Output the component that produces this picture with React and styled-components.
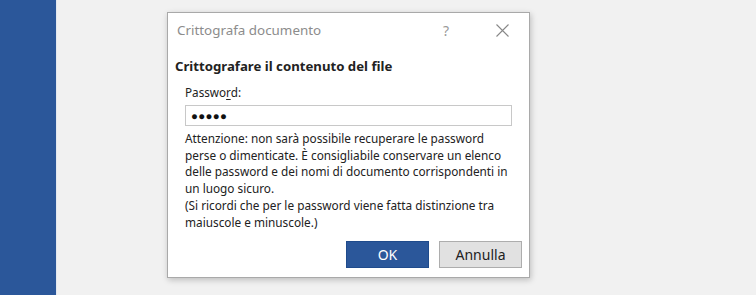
import React from "react";
import styled, { createGlobalStyle } from "styled-components";

const Global = createGlobalStyle`
  html, body { margin: 0; padding: 0; background: #f1f1f1; }
  body { font-family: "Noto Sans", "Open Sans", sans-serif; }
`;

const Page = styled.div`
  display: flex;
  width: 756px;
  height: 295px;
  background: #f1f1f1;
  overflow: hidden;
`;

const Sidebar = styled.div`
  width: 56px;
  flex: none;
  background: #2b579a;
  border-right: 1px solid #e3e8ef;
`;

const Stage = styled.div`
  flex: 1;
  padding: 12px 0 0 110px;
`;

const Dialog = styled.div`
  width: 361px;
  height: 264px;
  background: #fff;
  border: 1px solid #a9a9a9;
  box-shadow: 1px 2px 6px rgba(0, 0, 0, 0.22);
  display: flex;
  flex-direction: column;
  box-sizing: content-box;
`;

const TitleBar = styled.div`
  flex: none;
  display: flex;
  align-items: center;
  height: 34px;
  padding: 0 0 0 9px;
`;

const Title = styled.div`
  flex: 1;
  font-size: 13.4px;
  color: #8c8c8c;
`;

const TitleButton = styled.div`
  width: ${(p) => p.w}px;
  display: flex;
  justify-content: center;
  color: #999;
  font-size: 14px;
`;

const Body = styled.div`
  flex: none;
  padding: 10px 17px 0 7px;
`;

const Heading = styled.div`
  font-weight: bold;
  font-size: 13.2px;
  line-height: 18px;
  color: #222;
  margin-bottom: 9px;
`;

const Field = styled.div`
  padding-left: 10px;
`;

const Label = styled.div`
  font-size: 11.7px;
  line-height: 17px;
  color: #222;
  margin-bottom: 4px;
  u { text-decoration-thickness: 1px; text-underline-offset: 2px; }
`;

const Input = styled.div`
  height: 19px;
  border: 1px solid #c8c8c8;
  display: flex;
  align-items: center;
  padding-left: 5px;
  font-size: 11.5px;
  letter-spacing: 0.3px;
  color: #111;
`;

const Note = styled.p`
  margin: 4px 0 0 0;
  font-size: 11.8px;
  line-height: 16.7px;
  color: #222;
  white-space: nowrap;
`;

const Buttons = styled.div`
  display: flex;
  justify-content: flex-end;
  gap: 10px;
  padding: 0 7px 0 0;
  margin-top: auto;
  margin-bottom: 9px;
`;

const Button = styled.div`
  width: 81px;
  height: 25px;
  display: flex;
  align-items: center;
  justify-content: center;
  font-size: 14px;
  background: ${(p) => (p.primary ? "#2b579a" : "#e1e1e1")};
  color: ${(p) => (p.primary ? "#fff" : "#222")};
  border: 1px solid ${(p) => (p.primary ? "#1f4b8c" : "#adadad")};
`;

export default function App() {
  return (
    <Page>
      <Global />
      <Sidebar />
      <Stage>
        <Dialog>
          <TitleBar>
            <Title>Crittografa documento</Title>
            <TitleButton w={58}>?</TitleButton>
            <TitleButton w={54}>
              <svg width="13" height="13" viewBox="0 0 13 13">
                <path d="M0.5 0.5 L12.5 12.5 M12.5 0.5 L0.5 12.5" stroke="#888" strokeWidth="1.1" fill="none" />
              </svg>
            </TitleButton>
          </TitleBar>
          <Body>
            <Heading>Crittografare il contenuto del file</Heading>
            <Field>
              <Label>
                Passwo<u>r</u>d:
              </Label>
              <Input>●●●●●</Input>
              <Note>
                Attenzione: non sarà possibile recuperare le password
                <br />
                perse o dimenticate. È consigliabile conservare un elenco
                <br />
                delle password e dei nomi di documento corrispondenti in
                <br />
                un luogo sicuro.
                <br />
                (Si ricordi che per le password viene fatta distinzione tra
                <br />
                maiuscole e minuscole.)
              </Note>
            </Field>
          </Body>
          <Buttons>
            <Button primary>OK</Button>
            <Button>Annulla</Button>
          </Buttons>
        </Dialog>
      </Stage>
    </Page>
  );
}
